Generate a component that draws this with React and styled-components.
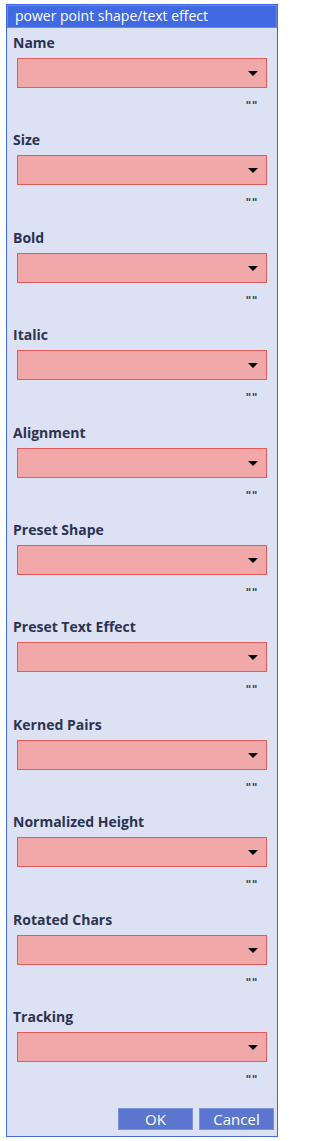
import React from "react";
import styled, { createGlobalStyle } from "styled-components";

const Global = createGlobalStyle`
  html, body { margin: 0; padding: 0; background: #ffffff; overflow: hidden; }
  body { font-family: "Open Sans", "Noto Sans", sans-serif; }
`;

const Panel = styled.div`
  box-sizing: border-box;
  margin: 4px 0 0 6px;
  width: 272px;
  height: 1133px;
  border: 1.5px solid #4169e1;
  background: #dce1f4;
  display: flex;
  flex-direction: column;
`;

const Header = styled.div`
  box-sizing: border-box;
  height: 23px;
  background: #4169e1;
  border: 1px solid #6a8ae8;
  color: #ffffff;
  font-size: 14px;
  line-height: 20px;
  padding-left: 7px;
  white-space: nowrap;
`;

const Body = styled.div`
  display: flex;
  flex-direction: column;
  padding-top: 5px;
`;

const Group = styled.div`
  height: 97.4px;
  display: flex;
  flex-direction: column;
`;

const Label = styled.div`
  font-weight: 700;
  font-size: 14px;
  line-height: 20px;
  color: #2b3350;
  padding-left: 6px;
`;

const Select = styled.div`
  box-sizing: border-box;
  margin: 5px 0 0 10px;
  width: 250px;
  height: 30px;
  background: #f0a8a8;
  border: 1px solid #e35a5a;
  display: flex;
  align-items: center;
  justify-content: flex-end;
  padding-right: 8px;
`;

const Arrow = styled.span`
  width: 0;
  height: 0;
  border-left: 5px solid transparent;
  border-right: 5px solid transparent;
  border-top: 5px solid #000000;
  margin-top: 1px;
`;

const QuoteRow = styled.div`
  display: flex;
  justify-content: flex-end;
  padding-right: 19px;
  margin-top: 12px;
  height: 12px;
`;

const Quote = styled.span`
  font-family: "DejaVu Sans", sans-serif;
  font-size: 11px;
  font-weight: 700;
  line-height: 12px;
  color: #333c55;
  letter-spacing: 0.5px;
`;

const Footer = styled.div`
  display: flex;
  justify-content: flex-end;
  gap: 6px;
  padding-right: 3px;
  margin-top: 4px;
`;

const Button = styled.button`
  box-sizing: border-box;
  width: 75px;
  height: 22px;
  background: #5a76cf;
  border: 1px solid #7a93e0;
  color: #ffffff;
  font-family: "Open Sans", "Noto Sans", sans-serif;
  font-size: 15px;
  line-height: 18px;
  padding: 0;
`;

const fields = [
  "Name",
  "Size",
  "Bold",
  "Italic",
  "Alignment",
  "Preset Shape",
  "Preset Text Effect",
  "Kerned Pairs",
  "Normalized Height",
  "Rotated Chars",
  "Tracking",
];

export default function App() {
  return (
    <>
      <Global />
      <Panel>
        <Header>power point shape/text effect</Header>
        <Body>
          {fields.map((f) => (
            <Group key={f}>
              <Label>{f}</Label>
              <Select>
                <Arrow />
              </Select>
              <QuoteRow>
                <Quote>""</Quote>
              </QuoteRow>
            </Group>
          ))}
        </Body>
        <Footer>
          <Button>OK</Button>
          <Button>Cancel</Button>
        </Footer>
      </Panel>
    </>
  );
}
